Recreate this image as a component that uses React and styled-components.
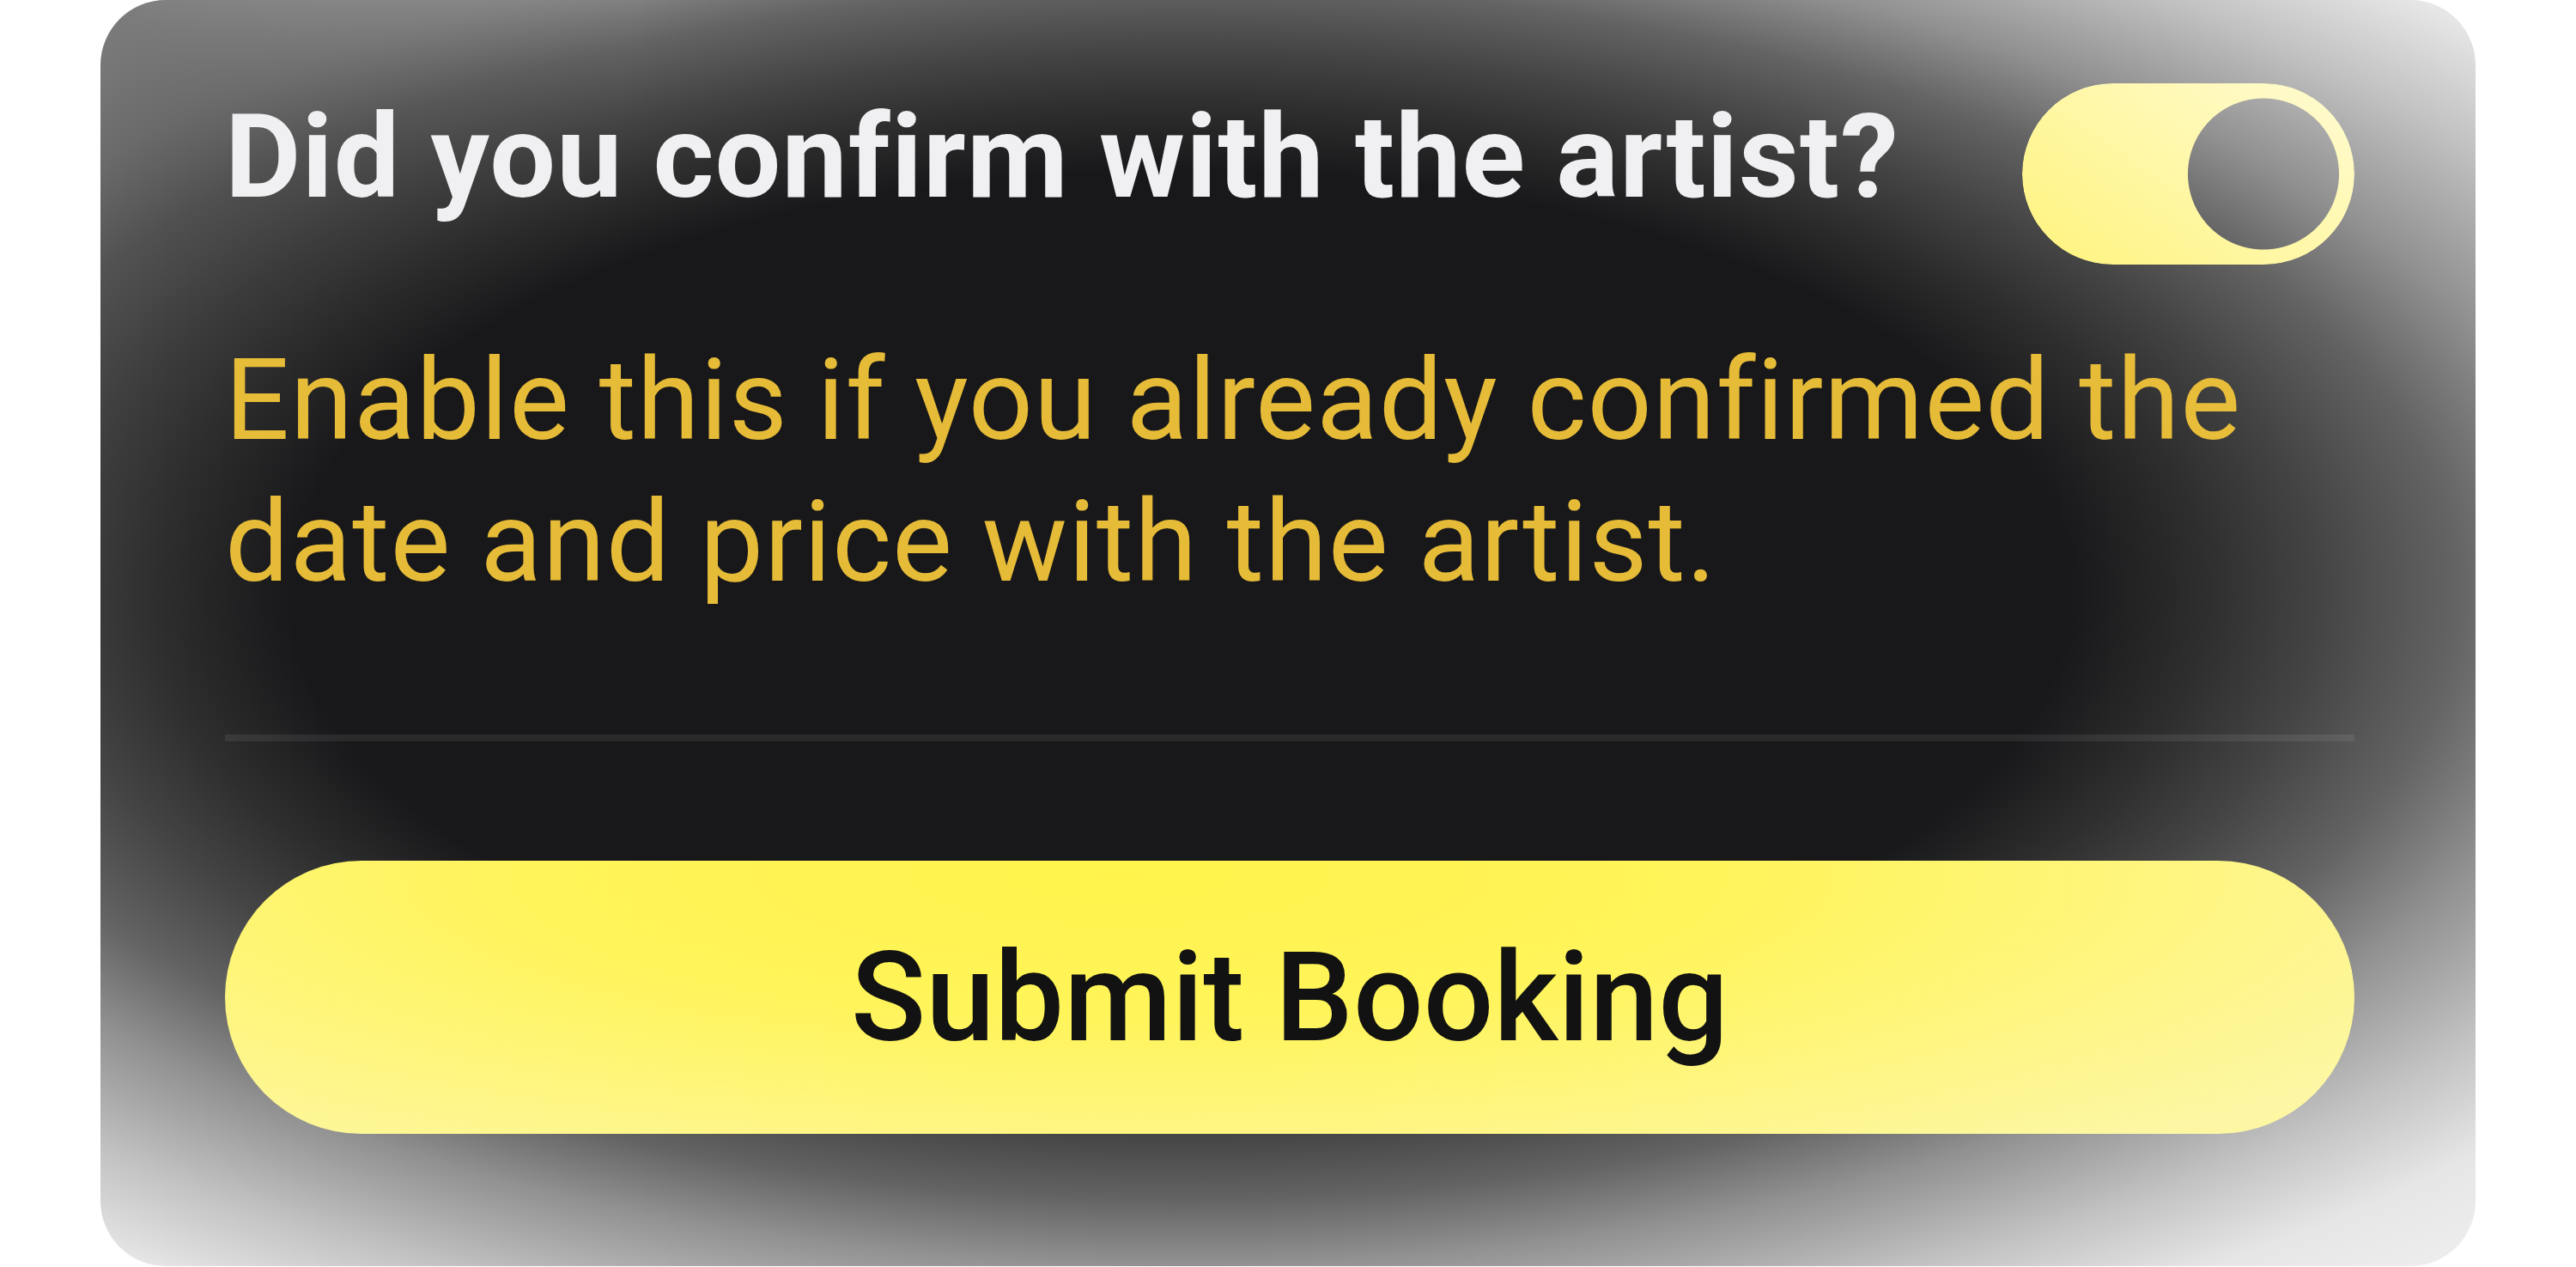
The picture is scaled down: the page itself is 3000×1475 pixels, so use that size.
import React from "react";
import styled, { createGlobalStyle } from "styled-components";

const GlobalStyle = createGlobalStyle`
  html, body {
    margin: 0;
    padding: 0;
    background: #ffffff;
  }
  * { box-sizing: border-box; }
`;

const Page = styled.div`
  width: 3000px;
  height: 1475px;
  padding-left: 117px;
  font-family: Roboto, "Noto Sans", Arial, sans-serif;
`;

const Card = styled.section`
  width: 2766px;
  height: 1474px;
  border-radius: 76px;
  padding: 97px 141px 154px 145px;
  display: flex;
  flex-direction: column;
  background:
    radial-gradient(circle at 0 0, rgba(24, 24, 26, 0.45) 0, rgba(24, 24, 26, 0) 620px),
    radial-gradient(
      ellipse 1325px 630px at 1258px 690px,
      #18181a 0%,
      #18181a 78%,
      #2e2e2f 90%,
      #444444 100%,
      #636363 112%,
      #919191 124%,
      #c2c2c2 140%,
      #e6e6e6 154%,
      #efefef 170%
    );
`;

const Header = styled.div`
  display: flex;
  justify-content: space-between;
  align-items: flex-start;
  height: 211px;
`;

const Title = styled.h2`
  margin: 0;
  padding-top: 4px;
  font-size: 136px;
  line-height: 1.2;
  font-weight: 700;
  letter-spacing: 1.2px;
  color: #f0f0f2;
  white-space: nowrap;
`;

const Toggle = styled.button`
  flex-shrink: 0;
  width: 387px;
  height: 211px;
  border: none;
  padding: 0;
  border-radius: 106px;
  background: linear-gradient(35deg, #fff37c 0%, #fff8ad 55%, #fffbd2 100%);
  -webkit-mask-image: radial-gradient(circle at 281px 50%, transparent 87.5px, #000 88.5px);
  mask-image: radial-gradient(circle at 281px 50%, transparent 87.5px, #000 88.5px);
  cursor: pointer;
`;

const Description = styled.p`
  margin: 76px 0 0;
  font-size: 132px;
  line-height: 165px;
  font-weight: 400;
  letter-spacing: 1px;
  color: rgba(241, 196, 58, 0.95);
`;

const Divider = styled.hr`
  margin: 141px 0 0;
  border: none;
  height: 8px;
  background: rgba(255, 255, 255, 0.08);
`;

const SubmitButton = styled.button`
  margin-top: 139px;
  height: 318px;
  width: 100%;
  border: none;
  border-radius: 159px;
  display: flex;
  align-items: center;
  justify-content: center;
  font-family: Roboto, "Noto Sans", Arial, sans-serif;
  font-size: 144px;
  font-weight: 500;
  color: #121212;
  background: radial-gradient(
    ellipse 70% 130% at 42% 5%,
    #fff34c 0%,
    #fff45a 40%,
    #fdf7a4 100%
  );
  cursor: pointer;
`;

export default function App() {
  return (
    <>
      <GlobalStyle />
      <Page>
        <Card>
          <Header>
            <Title>Did you confirm with the artist?</Title>
            <Toggle aria-label="Confirmed with artist" />
          </Header>
          <Description>
            Enable this if you already confirmed the date and price with the artist.
          </Description>
          <Divider />
          <SubmitButton>Submit Booking</SubmitButton>
        </Card>
      </Page>
    </>
  );
}
